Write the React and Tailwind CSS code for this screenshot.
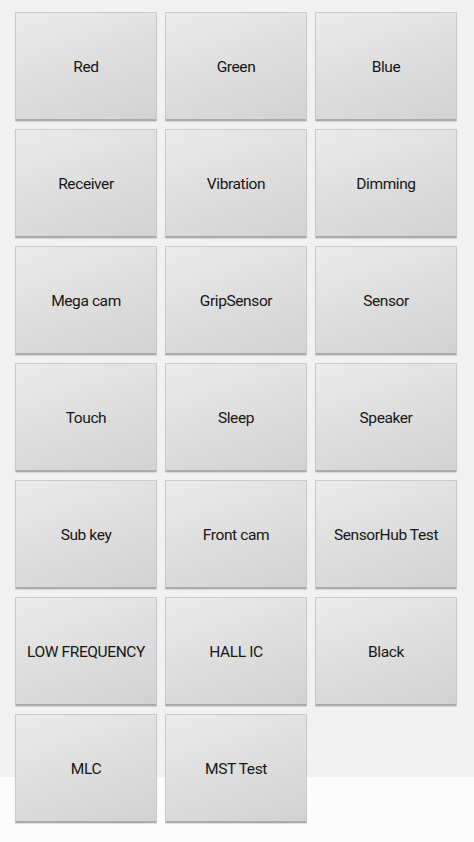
import React from "react";

const tests = [
  "Red",
  "Green",
  "Blue",
  "Receiver",
  "Vibration",
  "Dimming",
  "Mega cam",
  "GripSensor",
  "Sensor",
  "Touch",
  "Sleep",
  "Speaker",
  "Sub key",
  "Front cam",
  "SensorHub Test",
  "LOW FREQUENCY",
  "HALL IC",
  "Black",
  "MLC",
  "MST Test",
];

const TestButton = ({ label }) => (
  <button
    type="button"
    className="h-[109px] w-[142px] rounded-[1px] border border-[#cacaca] border-b-2 border-b-[#ababab] bg-[linear-gradient(160deg,#ebebeb_0%,#dfdfdf_45%,#d2d2d2_100%)] pt-[3px] text-[15.5px] tracking-[-0.4px] text-[#161616] shadow-[0_1px_1px_rgba(0,0,0,0.12)]"
  >
    {label}
  </button>
);

const App = () => {
  return (
    <div
      className="min-h-screen bg-[linear-gradient(to_bottom,#f1f1f1_777px,#fcfcfc_777px)] pl-[15px] pt-[12px]"
      style={{ fontFamily: "Roboto, 'Liberation Sans', sans-serif" }}
    >
      <div className="grid grid-cols-[repeat(3,142px)] gap-x-[8px] gap-y-[8px]">
        {tests.map((t) => (
          <TestButton key={t} label={t} />
        ))}
      </div>
    </div>
  );
};

export default App;
